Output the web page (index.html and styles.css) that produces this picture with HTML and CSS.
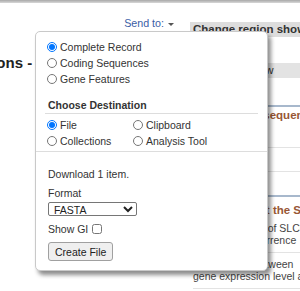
FILE: index.html
```html
<!DOCTYPE html>
<html lang="en">
<head>
    <meta charset="UTF-8">
    <meta name="viewport" content="width=device-width, initial-scale=1.0">
    <title>Send to</title>
    <link rel="stylesheet" href="styles.css">
</head>
<body>
    <div class="topbar"></div>

    <div class="layout">
        <main class="content">
            <div class="toolbar">
                <a class="send-to" href="#">Send to:<span class="caret"></span></a>
            </div>
            <h1 class="title">Sequence annotations - SLC6A4</h1>
        </main>

        <aside class="side">
            <div class="side-head">Change region shown</div>
            <div class="side-head">Customize view</div>

            <section class="portlet">
                <h3>Analyze this sequence</h3>
                <ul class="links">
                    <li>Run BLAST</li>
                    <li>Pick Primers</li>
                    <li>BLink</li>
                </ul>
            </section>

            <section class="portlet">
                <h3>Articles about the SLC6A4 gene</h3>
                <ul class="articles">
                    <li>Polymorphisms of SLC6A4 in<br>and risk of occurrence</li>
                    <li>Relationship between<br>gene expression level and</li>
                </ul>
            </section>
        </aside>
    </div>

    <div class="send-menu">
        <div class="choices">
            <label class="opt"><input type="radio" name="what" checked>Complete Record</label>
            <label class="opt"><input type="radio" name="what">Coding Sequences</label>
            <label class="opt"><input type="radio" name="what">Gene Features</label>
        </div>

        <div class="dest">
            <h3>Choose Destination</h3>
            <div class="dest-grid">
                <label class="opt"><input type="radio" name="dest" checked>File</label>
                <label class="opt"><input type="radio" name="dest">Clipboard</label>
                <label class="opt"><input type="radio" name="dest">Collections</label>
                <label class="opt"><input type="radio" name="dest">Analysis Tool</label>
            </div>
        </div>

        <div class="download">
            <p>Download 1 item.</p>
            <p class="field-label">Format</p>
            <select class="format">
                <option>FASTA</option>
                <option>GenBank</option>
            </select>
            <label class="show-gi">Show GI<input type="checkbox"></label>
            <button class="create">Create File</button>
        </div>
    </div>
</body>
</html>
```

FILE: styles.css
```css
body {
    margin: 0;
    width: 300px;
    height: 291px;
    overflow: hidden;
    font-family: "Liberation Sans", Arial, sans-serif;
    color: #333;
    background: #fff;
    position: relative;
}
.topbar {
    height: 3px;
    background: linear-gradient(#a8a8a8, #d8d8d8);
}
.layout {
    display: grid;
    grid-template-columns: 180px 220px;
    column-gap: 10px;
}

/* main column */
.toolbar {
    margin-top: 12px;
    padding-right: 6px;
    text-align: right;
    line-height: 14px;
}
.send-to {
    font-size: 10.7px;
    color: #3b5ea6;
    text-decoration: none;
}
.caret {
    display: inline-block;
    margin-left: 4px;
    vertical-align: middle;
    border-left: 3px solid transparent;
    border-right: 3px solid transparent;
    border-top: 3px solid #555;
}
.title {
    margin: 23px 0 0 -137px;
    font-size: 15px;
    line-height: 20px;
    white-space: nowrap;
    color: #222;
}

/* sidebar */
.side {
    white-space: nowrap;
}
.side-head {
    margin-top: 19px;
    height: 15px;
    line-height: 15px;
    padding-left: 3px;
    background: #ddd;
    font-size: 11.5px;
    font-weight: bold;
    color: #333;
}
.side-head + .side-head {
    margin-top: 26px;
    background: #e3e3e3;
    font-weight: normal;
}
.portlet {
    border-top: 2px solid #a7b8cc;
}
.side-head + .portlet {
    margin-top: 27px;
}
.portlet h3 {
    margin: 0;
    padding-left: 3px;
    line-height: 17px;
    font-size: 11.5px;
    color: #985735;
}
.portlet + .portlet h3 {
    margin-top: 5px;
}
.links,
.articles {
    list-style: none;
    margin: 0;
    padding: 0 0 0 3px;
    font-size: 10.5px;
}
.links li {
    line-height: 23px;
    border-bottom: 1px solid #e3e3e3;
    color: #3b5ea6;
}
.links li:last-child {
    border-bottom: none;
}
.articles li {
    padding: 3px 0 6px;
    line-height: 12px;
    color: #444;
    border-bottom: 1px solid #e3e3e3;
}
.articles li + li {
    padding-top: 5px;
}

/* send to menu */
.send-menu {
    position: absolute;
    left: 35px;
    top: 31px;
    width: 231px;
    padding: 7px 0 9px;
    background: #fff;
    border: 1px solid #c9c9c9;
    border-radius: 5px;
    box-shadow: 3px 4px 4px rgba(0, 0, 0, 0.45);
    font-size: 10.5px;
    color: #333;
}
.choices {
    padding-left: 11px;
}
.opt {
    display: flex;
    align-items: center;
    height: 16px;
    white-space: nowrap;
}
.opt input {
    width: 10px;
    height: 10px;
    margin: 0 3px 0 0;
}
.dest {
    margin-top: 11px;
    padding-bottom: 2px;
    border-bottom: 1px solid #ddd;
}
.dest h3 {
    margin: 0 9px;
    padding-left: 3px;
    font-size: 10.5px;
    line-height: 15px;
    border-bottom: 1px solid #ddd;
}
.dest-grid {
    display: grid;
    grid-template-columns: 86px 1fr;
    margin-top: 3px;
    padding-left: 11px;
}
.download {
    padding: 14px 0 0 12px;
}
.download p {
    margin: 0;
    line-height: 16px;
}
.download .field-label {
    margin-top: 3px;
}
.format {
    display: block;
    width: 89px;
    height: 14px;
    margin-top: 1px;
    padding: 0 0 0 1px;
    font-family: inherit;
    font-size: 10.5px;
    color: #222;
    border: 1px solid #767676;
    border-radius: 2px;
    background: #fff;
}
.show-gi {
    display: flex;
    align-items: center;
    height: 16px;
    margin-top: 5px;
}
.show-gi input {
    width: 10px;
    height: 10px;
    margin: 0 0 0 4px;
}
.create {
    display: block;
    margin-top: 5px;
    height: 19px;
    padding: 0 6px;
    font-family: inherit;
    font-size: 10.5px;
    color: #222;
    background: #efefef;
    border: 1px solid #a0a0a0;
    border-radius: 3px;
}
```
